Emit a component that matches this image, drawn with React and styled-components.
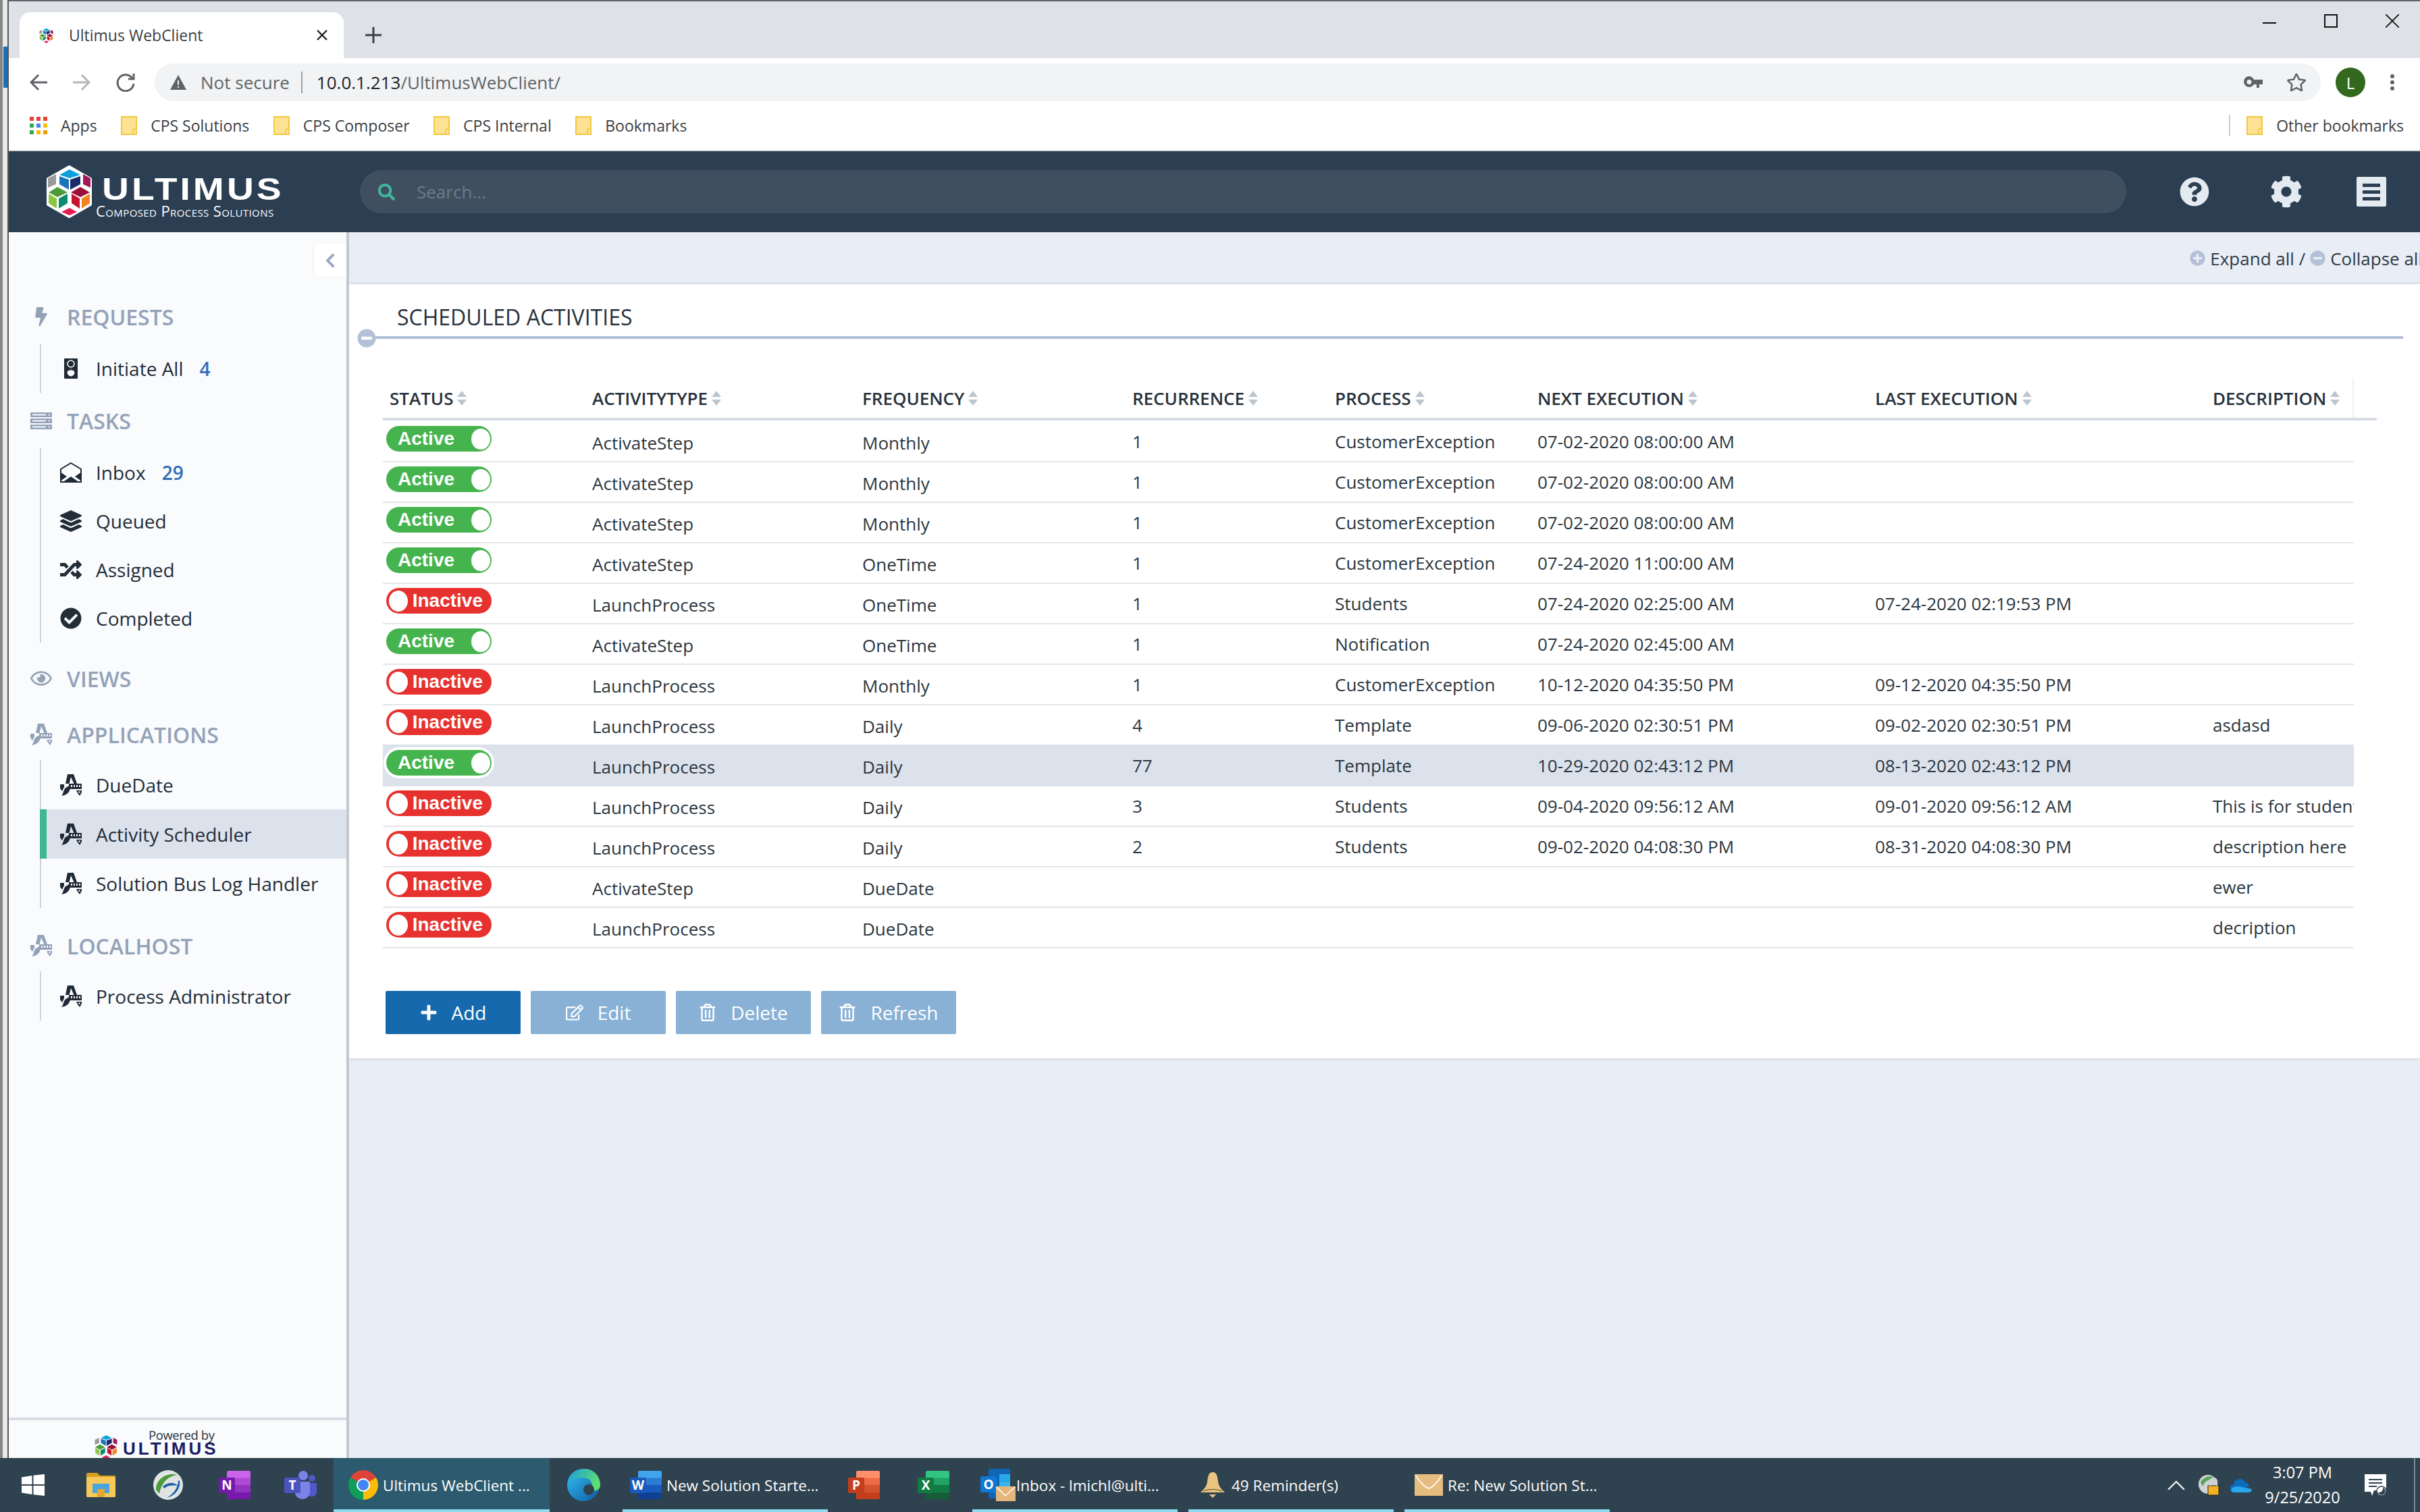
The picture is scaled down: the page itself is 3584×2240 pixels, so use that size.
import React from 'react'
import styled, { createGlobalStyle } from 'styled-components'
import {
  FaBolt, FaLayerGroup, FaRandom, FaCheckCircle, FaRegEye,
  FaQuestionCircle, FaCog, FaSearch, FaChevronLeft, FaPlus, FaRegEdit, FaRegTrashAlt,
  FaRegStar, FaPlusCircle, FaMinusCircle,
} from 'react-icons/fa'

const Global = createGlobalStyle`
  html, body { margin: 0; width: 3584px; height: 2240px; overflow: hidden; background: #e9edf5; }
  * { box-sizing: border-box; }
  body { font-family: "Open Sans", "Liberation Sans", sans-serif; }
`

const Screen = styled.div`
  width: 3584px;
  height: 2240px;
  display: flex;
  flex-direction: column;
  overflow: hidden;
`
const Desktop = styled.div`
  flex: 1;
  min-height: 0;
  display: flex;
`
const DesktopEdge = styled.div`
  width: 13px;
  background:
    linear-gradient(#1a6fb5, #1a6fb5) 5px 69px / 6px 61px no-repeat,
    linear-gradient(to right, #868686 0 4px, #e9e9e9 4px 11px, #555 11px 13px);
`
const Browser = styled.div`
  flex: 1;
  min-width: 0;
  display: flex;
  flex-direction: column;
`

/* chrome */
const TabStrip = styled.div`
  height: 86px;
  background: #dee1e6;
  border-top: 2px solid #5f6368;
  padding: 16px 0 0 16px;
  display: flex;
  align-items: flex-start;
`
const Tab = styled.div`
  width: 480px;
  height: 68px;
  background: #fff;
  border-radius: 16px 16px 0 0;
  display: flex;
  align-items: center;
  padding: 0 24px 0 28px;
  font-size: 23px;
  color: #3c4043;
`
const TabTitle = styled.span`
  margin-left: 22px;
  flex: 1;
`
const NewTab = styled.div`
  margin: 22px 0 0 32px;
  width: 24px;
  height: 24px;
  display: flex;
`
const WinControls = styled.div`
  margin-left: auto;
  display: flex;
  align-items: center;
  gap: 71px;
  padding: 3px 31px 0 0;
`
const Toolbar = styled.div`
  height: 64px;
  background: #fff;
  display: flex;
  align-items: center;
  padding: 8px 38px 0 28px;
`
const NavBtn = styled.div`
  width: 32px;
  height: 32px;
  margin-right: ${p => p.$gap}px;
  display: flex;
  align-items: center;
  justify-content: center;
`
const Omnibox = styled.div`
  flex: 1;
  height: 56px;
  background: #f1f3f4;
  border-radius: 28px;
  display: flex;
  align-items: center;
  padding: 0 21px 0 23px;
  font-size: 26px;
`
const NotSecure = styled.span`
  color: #5f6368;
  margin-left: 21px;
`
const OmniDivider = styled.span`
  width: 2px;
  height: 32px;
  background: #9aa0a6;
  margin: 0 21px 0 17px;
`
const Url = styled.span`
  color: #202124;
`
const UrlRest = styled.span`
  color: #5f6368;
`
const OmniRight = styled.div`
  margin-left: auto;
  display: flex;
  align-items: center;
  gap: 35px;
`
const Avatar = styled.div`
  width: 44px;
  height: 44px;
  border-radius: 50%;
  background: #33691e;
  color: #fff;
  font-size: 24px;
  display: flex;
  align-items: center;
  justify-content: center;
  margin: 0 37px 0 22px;
`
const BookmarkBar = styled.div`
  height: 74px;
  background: #fff;
  border-bottom: 2px solid #dadce0;
  display: flex;
  align-items: center;
  padding: 0 24px 0 31px;
  font-size: 23px;
  color: #3c4043;
`
const Bookmark = styled.div`
  display: flex;
  align-items: center;
  gap: 20px;
  margin-right: 35.5px;
`
const BookmarkEnd = styled.div`
  margin-left: auto;
  display: flex;
  align-items: center;
  gap: 20px;
  border-left: 2px solid #c9cbce;
  padding-left: 24px;
  height: 32px;
`

/* app header */
const AppBar = styled.div`
  height: 120px;
  background: #2b3e52;
  display: flex;
  align-items: center;
  padding-left: 55px;
`
const Brand = styled.div`
  width: 465px;
  display: flex;
  align-items: center;
  gap: 5px;
`
const BrandText = styled.div`
  color: #fff;
  display: flex;
  flex-direction: column;
  padding-top: 14px;
`
const BrandName = styled.div`
  font-family: "Liberation Sans", sans-serif;
  font-weight: 700;
  font-size: 46px;
  line-height: 42px;
  letter-spacing: 3.4px;
  margin-left: 9px;
  transform: scaleX(1.2);
  transform-origin: left center;
  white-space: nowrap;
`
const BrandSub = styled.div`
  font-size: 22px;
  line-height: 22px;
  font-variant: small-caps;
  white-space: nowrap;
  letter-spacing: 0.4px;
`
const SearchBar = styled.div`
  width: 2616px;
  height: 64px;
  background: #3f4f60;
  border-radius: 32px;
  display: flex;
  align-items: center;
  padding-left: 27px;
  gap: 32px;
  color: #6e7a86;
  font-size: 26px;
`
const AppIcons = styled.div`
  display: flex;
  align-items: center;
  margin-left: 79px;
  color: #e3eaf0;
`
const MenuBox = styled.div`
  width: 44px;
  height: 44px;
  background: #e3eaf0;
  border-radius: 2px;
  margin-left: 80px;
  display: flex;
  flex-direction: column;
  justify-content: center;
  gap: 5px;
  padding: 0 9px;
`
const MenuLine = styled.span`
  height: 5px;
  background: #2b3e52;
`

/* app body */
const AppBody = styled.div`
  flex: 1;
  min-height: 0;
  display: flex;
`
const Sidebar = styled.aside`
  position: relative;
  width: 504px;
  background: #f9fbfd;
  border-right: 4px solid #c3c8d0;
  padding-top: 84px;
  display: flex;
  flex-direction: column;
`
const Collapse = styled.div`
  position: absolute;
  top: 17px;
  right: 0;
  width: 48px;
  height: 49px;
  background: #fff;
  border-radius: 6px 0 0 6px;
  color: #9aa5c0;
  display: flex;
  align-items: center;
  justify-content: center;
  font-size: 24px;
  box-shadow: -1px 0 2px rgba(0, 0, 0, 0.08);
`
const GroupHead = styled.div`
  height: ${p => p.$h || 82}px;
  margin-top: ${p => p.$top || 0}px;
  display: flex;
  align-items: center;
  gap: 22px;
  padding-left: 32px;
  font-size: 32px;
  font-weight: 600;
  color: #94a2b8;
`
const IconSlot = styled.span`
  width: 32px;
  height: 32px;
  flex: none;
  display: flex;
  align-items: center;
  justify-content: center;
  font-size: ${p => p.$size || 32}px;
`
const ItemList = styled.div`
  margin-left: 46px;
  border-left: 2px solid #d0d3d8;
`
const Item = styled.div`
  height: ${p => p.$h || 72}px;
  display: flex;
  align-items: center;
  gap: 21px;
  padding-left: ${p => (p.$active ? 20 : 28)}px;
  margin-left: ${p => (p.$active ? -2 : 0)}px;
  font-size: 28px;
  color: #232d38;
  background: ${p => (p.$active ? '#dce2ec' : 'transparent')};
  border-left: ${p => (p.$active ? '10px solid #3fb793' : '0')};
`
const Count = styled.span`
  color: #2f6db8;
  font-weight: 600;
  margin-left: 3px;
`
const SideFooter = styled.div`
  margin-top: auto;
  height: 60px;
  border-top: 4px solid #d8dde6;
  overflow: hidden;
  display: flex;
  padding: 19px 0 0 126px;
`
const FooterText = styled.div`
  margin: -8px 0 0 7px;
  display: flex;
  flex-direction: column;
`
const PoweredBy = styled.div`
  font-size: 18.500px;
  line-height: 21px;
  color: #2c3440;
  letter-spacing: -0.4px;
  align-self: flex-end;
  margin-right: 6px;
`
const FooterName = styled.div`
  font-family: "Liberation Sans", sans-serif;
  font-weight: 700;
  font-size: 26px;
  line-height: 20px;
  color: #1c1c63;
  letter-spacing: 4px;
`

/* main */
const Main = styled.main`
  flex: 1;
  min-width: 0;
  background: #e9edf5;
  overflow: hidden;
`
const ExpandBar = styled.div`
  height: 77px;
  display: flex;
  align-items: center;
  justify-content: flex-end;
  font-size: 26px;
  color: #2f3b47;
  white-space: nowrap;
  margin-right: -4px;
  gap: 7px;
`
const RoundIcon = styled.span`
  color: #b3c0d8;
  display: flex;
  font-size: 23px;
`
const Panel = styled.section`
  background: #fff;
  padding-bottom: 36px;
  box-shadow: 0 -2px 2px rgba(90, 100, 120, 0.12), 0 2px 3px rgba(90, 100, 120, 0.15);
`
const SectionHead = styled.div`
  position: relative;
  height: 81px;
  margin: 0 25px 0 39px;
  padding: 19px 0 0 32px;
  border-bottom: 4px solid #b0bfd5;
  display: flex;
  align-items: center;
  font-size: 32px;
  color: #28323c;
`
const SectionToggle = styled.span`
  position: absolute;
  left: -27px;
  bottom: -17px;
  width: 28px;
  height: 28px;
  color: #b3c0d8;
  font-size: 28px;
  display: flex;
`
const TableHead = styled.div`
  margin: 58px 0 0 50px;
  width: 2953px;
  height: 63px;
  border-bottom: 4px solid #d6dce6;
  display: flex;
`
const HeadCell = styled.div`
  width: ${p => p.$w}px;
  padding-left: 10px;
  display: flex;
  align-items: center;
  gap: 5px;
  font-size: 26px;
  font-weight: 600;
  color: #28323c;
  white-space: nowrap;
  border-right: ${p => (p.$last ? '2px solid #eef0f3' : '0')};
`
const SortArrows = styled.svg`
  width: 16px;
  height: 22px;
  fill: #bcc6cc;
`
const Rows = styled.div`
  margin-left: 50px;
  width: 2919px;
  padding-top: 2px;
`
const Row = styled.div`
  height: 60px;
  display: flex;
  border-bottom: 2px solid ${p => (p.$selected ? '#dbe2ec' : '#e1e6ec')};
  background: ${p => (p.$selected ? '#dbe2ec' : 'transparent')};
  box-shadow: ${p => (p.$selected ? '0 -2px 0 #dbe2ec' : 'none')};
`
const Cell = styled.div`
  width: ${p => p.$w}px;
  padding: ${p => (p.$drop ? '4px' : '0')} 0 0 10px;
  display: flex;
  align-items: center;
  font-size: 26px;
  color: #2b3640;
  white-space: nowrap;
  overflow: hidden;
`
const StatusCell = styled.div`
  width: ${p => p.$w}px;
  padding: 6px 0 0 5px;
`
const Toggle = styled.div`
  width: 156px;
  height: 38px;
  border-radius: 19px;
  background: ${p => (p.$on ? '#45b44e' : '#e6312f')};
  box-shadow: ${p => (p.$focus ? '0 0 0 4px #fff' : 'none')};
  display: flex;
  align-items: center;
  flex-direction: ${p => (p.$on ? 'row' : 'row-reverse')};
  justify-content: space-between;
  padding: ${p => (p.$on ? '0 2px 0 17px' : '0 13px 0 4px')};
  font-family: "Liberation Sans", sans-serif;
  font-weight: 700;
  font-size: 28px;
  color: #fff;
`
const Knob = styled.span`
  width: 28px;
  height: 31px;
  background: #fff;
  border-radius: 50%;
`
const Actions = styled.div`
  margin: 63px 0 0 54px;
  display: flex;
  gap: 15px;
`
const ActionBtn = styled.div`
  width: 200px;
  height: 64px;
  border-radius: 2px;
  background: ${p => (p.$primary ? '#1669ad' : '#88b1d5')};
  color: #fff;
  display: flex;
  align-items: center;
  justify-content: center;
  gap: 21px;
  font-size: 28px;
  & svg { font-size: 26px; }
`

/* taskbar */
const Taskbar = styled.div`
  height: 80px;
  background: #2f424f;
  display: flex;
  color: #fff;
  font-size: 22.5px;
`
const TaskSlot = styled.div`
  width: ${p => p.$w}px;
  margin-right: ${p => p.$gap || 0}px;
  flex: none;
  display: flex;
  align-items: center;
  justify-content: ${p => (p.$label ? 'flex-start' : 'center')};
  gap: ${p => p.$iconGap || 7}px;
  padding-left: ${p => p.$inset || 0}px;
  white-space: nowrap;
  background: ${p => (p.$active ? '#2c5a6e' : 'transparent')};
  border-bottom: ${p => (p.$open ? '4px solid #8fd8f0' : '0')};
  padding-top: ${p => (p.$open ? 4 : 0)}px;
`
const Tray = styled.div`
  margin-left: auto;
  display: flex;
  align-items: center;
`
const TraySlot = styled.span`
  display: flex;
  margin: 0 ${p => p.$right || 0}px 0 ${p => p.$left || 0}px;
`
const Clock = styled.div`
  width: 150px;
  text-align: center;
  font-size: 23.500px;
  line-height: 37px;
`
const ShowDesktop = styled.span`
  width: 2px;
  height: 80px;
  background: #7c8a94;
  margin: 0 7px 0 41px;
`

const ICON = '#1f2a36'

const UltimusLogo = ({ w, h, plain }) => (
  <svg width={w} height={h} viewBox="0 0 69 78" style={{ flex: 'none' }}>
    {!plain && <path d="M34.5 2 L66 20 V58 L34.5 76 L3 58 V20 Z" fill="#fff" stroke="#fff" strokeWidth="4" strokeLinejoin="round" />}
    <path d="M35 6 L51 14 L35 19 L20 14 Z" fill="#0aa0dc" />
    <path d="M20 16 V28 L34 36 V21 Z" fill="#1a74bb" />
    <path d="M51 16 V28 L36 36 V21 Z" fill="#1b2c6b" />
    <path d="M3 19 L15 13 V28 L3 33 Z" fill="#9a9a9a" />
    <path d="M66 19 L55 13 V28 L66 33 Z" fill="#a3185b" />
    <path d="M17 32 L32 40 L17 47 L4 40 Z" fill="#4c9a3a" />
    <path d="M4 42 L16 49 V64 L4 56 Z" fill="#8dc63f" />
    <path d="M19 49 L32 42 V56 L19 64 Z" fill="#0d8b6e" />
    <path d="M51 32 L65 40 L51 47 L37 40 Z" fill="#9c0f3a" />
    <path d="M38 42 L50 49 V64 L38 56 Z" fill="#c41230" />
    <path d="M53 49 L65 42 V56 L53 64 Z" fill="#f58220" />
    <path d="M35 63 L46 69 L35 74 L23 69 Z" fill="#e21f4f" />
  </svg>
)

const AppGlyph = ({ color = ICON }) => (
  <svg width="32" height="32" viewBox="0 0 32 32">
    <path d="M11 0 H20 L25 14 H20.500 L16 4 L13.500 14 H8 Z" fill={color} />
    <rect x="13" y="14" width="19" height="8" fill={color} />
    <path d="M16 16h2v3h-2zM20 16h2v3h-2zM24 16h2v3h-2zM28 16h2v3h-2z" fill="#f9fbfd" />
    <path d="M15 16 C16 24 12 31 2 32 C6 28 4 22 10 19 Z" fill={color} />
    <path d="M0 15 H6 V19 L3 25 L0 21 Z" fill={color} />
    <path d="M24 24 H32 V27 L29 32 L26 28 Z" fill={color} />
    <circle cx="28.500" cy="26.500" r="1.200" fill="#f9fbfd" />
  </svg>
)

const TrafficLight = () => (
  <svg width="20" height="30" viewBox="0 0 20 30">
    <rect width="20" height="30" rx="1" fill={ICON} />
    <circle cx="10" cy="8" r="5" fill="none" stroke="#f9fbfd" strokeWidth="1.600" />
    <path d="M5.500 9 A5 4 0 0 1 14.500 9 Z" fill={ICON} />
    <circle cx="10" cy="21" r="5.400" fill="#f9fbfd" />
    <path d="M5 18 A6 5 0 0 1 15 18 L15 19 A6 4 0 0 0 5 19 Z" fill={ICON} />
  </svg>
)

const TasksIcon = () => (
  <svg width="32" height="25" viewBox="0 0 32 25">
    {[0, 9, 18].map(y => (
      <g key={y}>
        <rect y={y} width="32" height="7" fill="#94a2b8" />
        <rect x="3" y={y + 2.5} width="20" height="2" fill="#f9fbfd" />
        <rect x="27" y={y + 2.5} width="2" height="2" fill="#f9fbfd" />
      </g>
    ))}
  </svg>
)

const OpenEnvelope = () => (
  <svg width="32" height="30" viewBox="0 0 32 30">
    <path d="M16 1 L31 10 V29 H1 V10 Z" fill="#f9fbfd" stroke={ICON} strokeWidth="2" strokeLinejoin="miter" />
    <path d="M0 14 L10 21 L0 28 Z M32 14 L22 21 L32 28 Z M3 30 L16 21 L29 30 Z" fill={ICON} />
  </svg>
)

const FolderIcon = () => (
  <svg width="24" height="28" viewBox="0 0 24 28" style={{ flex: 'none' }}>
    <rect x="1" y="1" width="22" height="26" fill="#fde293" stroke="#f0c93f" strokeWidth="2" />
    <rect x="18" y="19" width="5" height="8" rx="1" fill="#fde293" stroke="#f0c93f" strokeWidth="1.500" />
  </svg>
)

const AppsIcon = () => {
  const colors = ['#ea4335', '#ea4335', '#ea4335', '#34a853', '#4285f4', '#fbbc05', '#34a853', '#fbbc05', '#f29900']
  return (
    <svg width="26" height="26" viewBox="0 0 26 26">
      {colors.map((c, i) => (
        <rect key={i} x={(i % 3) * 10} y={Math.floor(i / 3) * 10} width="6" height="6" fill={c} />
      ))}
    </svg>
  )
}

const SortIcon = () => (
  <SortArrows viewBox="0 0 16 22">
    <path d="M8 0 L15 9 H1 Z" />
    <path d="M8 22 L15 13 H1 Z" />
  </SortArrows>
)

/* taskbar app icons */
const WinLogo = () => (
  <svg width="34" height="32" viewBox="0 0 34 32" fill="#fff">
    <path d="M0 4.500 L15.500 2 V15 H0 Z M17.500 1.700 L34 0 V15 H17.500 Z M0 17 H15.500 V30 L0 27.500 Z M17.500 17 H34 V32 L17.500 30.300 Z" />
  </svg>
)
const Explorer = () => (
  <svg width="43" height="36" viewBox="0 0 43 36">
    <path d="M0 2 a2 2 0 0 1 2-2 H16 L20 4 H43 V34 a2 2 0 0 1-2 2 H2 a2 2 0 0 1-2-2 Z" fill="#d99f21" />
    <rect y="6" width="43" height="30" rx="2" fill="#f6c958" />
    <path d="M9 16 H34 V30 H27 V24 H16 V30 H9 Z" fill="#4aa4e0" />
    <rect x="16" y="24" width="11" height="12" fill="#e3a92d" />
  </svg>
)
const GlobeApp = () => (
  <svg width="44" height="46" viewBox="0 0 44 46">
    <circle cx="22" cy="23" r="22" fill="#dfe3e3" />
    <path d="M4 30 C4 14 20 4 36 8 C24 9 12 18 9 36 Z" fill="#4c9a3a" />
    <path d="M37 16 C37 27 30 36 20 42 C30 40 41 30 39 17 Z" fill="#1a5fa8" />
    <path d="M14 25 C22 18 32 19 36 24 C30 23 22 23 16 28 Z" fill="#1a5fa8" />
  </svg>
)
const Tile = ({ w = 47, h = 42, a, b, c, d, letter, tile }) => (
  <svg width={w} height={h} viewBox="0 0 47 42">
    <rect x="12" width="35" height="42" rx="2" fill={a} />
    <rect x="12" y="10.500" width="35" height="10.500" fill={b} />
    <rect x="12" y="21" width="35" height="10.500" fill={c} />
    <rect x="12" y="31.500" width="35" height="10.500" fill={d} />
    <rect y="10" width="24" height="23" rx="2" fill={tile} />
    <text x="12" y="28" fontSize="19" fontWeight="700" fill="#fff" textAnchor="middle" fontFamily="Open Sans">{letter}</text>
  </svg>
)
const Teams = () => (
  <svg width="48" height="42" viewBox="0 0 48 42">
    <circle cx="28" cy="7" r="7" fill="#7b83eb" />
    <circle cx="41" cy="11" r="5" fill="#5059c9" />
    <path d="M36 18 H48 V32 a7 7 0 0 1-12 4 Z" fill="#5059c9" />
    <path d="M16 16 H38 V32 a11 10 0 0 1-22 0 Z" fill="#7b83eb" />
    <rect y="10" width="24" height="23" rx="2" fill="#4b53bc" />
    <text x="12" y="28" fontSize="19" fontWeight="700" fill="#fff" textAnchor="middle" fontFamily="Open Sans">T</text>
  </svg>
)
const ChromeLogo = () => (
  <svg width="44" height="44" viewBox="0 0 44 44">
    <path d="M22 22 L3 11 A22 22 0 0 1 41 11 Z" fill="#db4437" />
    <path d="M22 22 L3 11 A22 22 0 0 0 22 44 Z" fill="#0f9d58" />
    <path d="M22 22 L41 11 A22 22 0 0 1 22 44 Z" fill="#fbbc05" />
    <circle cx="22" cy="22" r="10" fill="#fff" />
    <circle cx="22" cy="22" r="8" fill="#4285f4" />
  </svg>
)
const EdgeLogo = () => (
  <svg width="49" height="48" viewBox="0 0 49 48">
    <defs>
      <linearGradient id="edgeA" x1="0" y1="0" x2="1" y2="1">
        <stop offset="0" stopColor="#35c1f1" />
        <stop offset="1" stopColor="#0c59a4" />
      </linearGradient>
      <linearGradient id="edgeB" x1="0" y1="0" x2="1" y2="0.500">
        <stop offset="0" stopColor="#1b9de2" />
        <stop offset="1" stopColor="#5fe06c" />
      </linearGradient>
    </defs>
    <circle cx="24" cy="24" r="24" fill="url(#edgeA)" />
    <path d="M2 18 C6 4 18 0 26 0 C40 0 49 12 49 24 C49 32 40 34 34 32 C40 28 38 14 24 13 C12 13 4 16 2 18 Z" fill="url(#edgeB)" />
    <circle cx="32" cy="31" r="8" fill="#2f424f" />
  </svg>
)
const Bell = () => (
  <svg width="36" height="38" viewBox="0 0 36 38" fill="#e8c47f">
    <path d="M18 0 C24 0 25 6 26 14 C27 22 32 26 36 30 H0 C4 26 9 22 10 14 C11 6 12 0 18 0 Z" />
    <path d="M13 33 H23 L18 38 Z" />
    <path d="M4 28 Q18 23 32 28" fill="none" stroke="#4a3f2a" strokeWidth="1" />
  </svg>
)
const Envelope = () => (
  <svg width="42" height="32" viewBox="0 0 42 32">
    <rect width="42" height="32" fill="#e6bd7f" />
    <path d="M2 2 C8 12 14 19 21 21 C28 19 34 12 40 2" fill="none" stroke="#fff" strokeWidth="1.500" />
  </svg>
)
const Outlook = () => (
  <svg width="52" height="48" viewBox="0 0 52 48">
    <rect x="12" width="32" height="44" rx="2" fill="#1066b5" />
    <rect x="28" y="8" width="16" height="12" fill="#28a8ea" />
    <rect x="28" y="20" width="16" height="12" fill="#50d9ff" opacity="0.700" />
    <rect y="11" width="24" height="24" rx="2" fill="#0f78d4" />
    <text x="12" y="30" fontSize="19" fontWeight="700" fill="#fff" textAnchor="middle" fontFamily="Open Sans">O</text>
    <rect x="23" y="26" width="29" height="22" fill="#e6b57a" />
    <path d="M24 27 L37 40 L51 27" fill="none" stroke="#fff" strokeWidth="1.500" />
  </svg>
)
const LockGlobe = () => (
  <svg width="31" height="32" viewBox="0 0 31 32">
    <circle cx="14" cy="15" r="14" fill="#cfd3d3" />
    <path d="M3 12 C8 3 18 1 26 6 C18 6 10 9 6 18 Z" fill="#5aa25a" />
    <rect x="14" y="17" width="16" height="14" fill="#f5b023" stroke="#222" strokeWidth="1" />
    <path d="M17 17 V11 a5 5 0 0 1 10 0 V17" fill="none" stroke="#c9cfd3" strokeWidth="2.500" />
  </svg>
)
const OneDrive = () => (
  <svg width="32" height="21" viewBox="0 0 32 21">
    <path d="M6 21 a6 6 0 0 1-1-12 a9 9 0 0 1 17-3 a7 7 0 0 1 6 6 Z" fill="#0f6cbd" />
    <path d="M6 21 C0 21 0 15 5 13 L12 12 L32 16 C32 19 30 21 27 21 Z" fill="#28a8ea" />
  </svg>
)
const NoticeIcon = () => (
  <svg width="32" height="32" viewBox="0 0 32 32">
    <path d="M0 0 H32 V24 H14 L11 32 L9 26 H0 Z" fill="#fff" />
    <path d="M6 7 H26 V9 H6 Z M6 12 H26 V14 H6 Z M6 17 H18 V19 H6 Z" fill="#2f424f" />
    <circle cx="25" cy="25" r="7" fill="#fff" stroke="#2f424f" strokeWidth="1.500" />
    <path d="M27 20 a5.500 5.500 0 1 1-7 7 a6 6 0 0 0 7-7 Z" fill="#2f424f" />
  </svg>
)

const COLS = [300, 400, 400, 300, 300, 500, 500, 219]
const HEADS = ['STATUS', 'ACTIVITYTYPE', 'FREQUENCY', 'RECURRENCE', 'PROCESS', 'NEXT EXECUTION', 'LAST EXECUTION', 'DESCRIPTION']

const ROWS = [
  [true, 'ActivateStep', 'Monthly', '1', 'CustomerException', '07-02-2020 08:00:00 AM', '', ''],
  [true, 'ActivateStep', 'Monthly', '1', 'CustomerException', '07-02-2020 08:00:00 AM', '', ''],
  [true, 'ActivateStep', 'Monthly', '1', 'CustomerException', '07-02-2020 08:00:00 AM', '', ''],
  [true, 'ActivateStep', 'OneTime', '1', 'CustomerException', '07-24-2020 11:00:00 AM', '', ''],
  [false, 'LaunchProcess', 'OneTime', '1', 'Students', '07-24-2020 02:25:00 AM', '07-24-2020 02:19:53 PM', ''],
  [true, 'ActivateStep', 'OneTime', '1', 'Notification', '07-24-2020 02:45:00 AM', '', ''],
  [false, 'LaunchProcess', 'Monthly', '1', 'CustomerException', '10-12-2020 04:35:50 PM', '09-12-2020 04:35:50 PM', ''],
  [false, 'LaunchProcess', 'Daily', '4', 'Template', '09-06-2020 02:30:51 PM', '09-02-2020 02:30:51 PM', 'asdasd'],
  [true, 'LaunchProcess', 'Daily', '77', 'Template', '10-29-2020 02:43:12 PM', '08-13-2020 02:43:12 PM', ''],
  [false, 'LaunchProcess', 'Daily', '3', 'Students', '09-04-2020 09:56:12 AM', '09-01-2020 09:56:12 AM', 'This is for students'],
  [false, 'LaunchProcess', 'Daily', '2', 'Students', '09-02-2020 04:08:30 PM', '08-31-2020 04:08:30 PM', 'description here'],
  [false, 'ActivateStep', 'DueDate', '', '', '', '', 'ewer'],
  [false, 'LaunchProcess', 'DueDate', '', '', '', '', 'decription'],
]

const BOOKMARKS = ['CPS Solutions', 'CPS Composer', 'CPS Internal', 'Bookmarks']

const App = () => (
  <Screen>
    <Global />
    <Desktop>
      <DesktopEdge />
      <Browser>
        <TabStrip>
          <Tab>
            <UltimusLogo w={23} h={25} plain />
            <TabTitle>Ultimus WebClient</TabTitle>
            <svg width="16" height="16" viewBox="0 0 16 16" stroke="#202124" strokeWidth="2.400"><path d="M1 1 L15 15 M15 1 L1 15" /></svg>
          </Tab>
          <NewTab>
            <svg width="24" height="24" viewBox="0 0 24 24" stroke="#3c4043" strokeWidth="3"><path d="M12 0 V24 M0 12 H24" /></svg>
          </NewTab>
          <WinControls>
            <svg width="20" height="20" viewBox="0 0 20 20" stroke="#111" strokeWidth="2"><path d="M0 13 H20" /></svg>
            <svg width="20" height="20" viewBox="0 0 20 20" stroke="#111" strokeWidth="2" fill="none"><rect x="1" y="1" width="18" height="18" /></svg>
            <svg width="20" height="20" viewBox="0 0 20 20" stroke="#111" strokeWidth="1.800"><path d="M0 0 L20 20 M20 0 L0 20" /></svg>
          </WinControls>
        </TabStrip>
        <Toolbar>
          <NavBtn $gap={32}>
            <svg width="26" height="26" viewBox="0 0 26 26" fill="none" stroke="#5f6368" strokeWidth="3"><path d="M26 13 H3 M13 2 L2 13 L13 24" /></svg>
          </NavBtn>
          <NavBtn $gap={33}>
            <svg width="26" height="26" viewBox="0 0 26 26" fill="none" stroke="#b4b7ba" strokeWidth="3"><path d="M0 13 H23 M13 2 L24 13 L13 24" /></svg>
          </NavBtn>
          <NavBtn $gap={27}>
            <svg width="28" height="28" viewBox="0 0 28 28" fill="none" stroke="#5f6368" strokeWidth="3"><path d="M24 8 A12 12 0 1 0 26 16" /><path d="M26 1 V9 H18" /></svg>
          </NavBtn>
          <Omnibox>
            <svg width="24" height="22" viewBox="0 0 24 22"><path d="M12 0 L24 22 H0 Z" fill="#5f6368" /><path d="M11 8 H13 V15 H11 Z M11 17 H13 V19 H11 Z" fill="#f1f3f4" /></svg>
            <NotSecure>Not secure</NotSecure>
            <OmniDivider />
            <Url>10.0.1.213</Url><UrlRest>/UltimusWebClient/</UrlRest>
            <OmniRight>
              <svg width="28" height="18" viewBox="0 0 28 18" fill="#5f6368"><path d="M8 0 a8 8 0 1 0 7 12 H19 V17 H23 V12 H28 V5 H15 A8 8 0 0 0 8 0 Z M8 5 a3.500 3.500 0 1 1 0 7 a3.500 3.500 0 0 1 0-7 Z" fillRule="evenodd" /></svg>
              <FaRegStar color="#5f6368" size={30} />
            </OmniRight>
          </Omnibox>
          <Avatar>L</Avatar>
          <svg width="6" height="24" viewBox="0 0 6 24" fill="#5f6368"><circle cx="3" cy="3" r="3" /><circle cx="3" cy="12" r="3" /><circle cx="3" cy="21" r="3" /></svg>
        </Toolbar>
        <BookmarkBar>
          <Bookmark>
            <AppsIcon />
            Apps
          </Bookmark>
          {BOOKMARKS.map(name => (
            <Bookmark key={name}>
              <FolderIcon />
              {name}
            </Bookmark>
          ))}
          <BookmarkEnd>
            <FolderIcon />
            Other bookmarks
          </BookmarkEnd>
        </BookmarkBar>
        <AppBar>
          <Brand>
            <UltimusLogo w={69} h={78} />
            <BrandText>
              <BrandName>ULTIMUS</BrandName>
              <BrandSub>Composed Process Solutions</BrandSub>
            </BrandText>
          </Brand>
          <SearchBar>
            <FaSearch color="#3fb79b" size={25} />
            Search...
          </SearchBar>
          <AppIcons>
            <FaQuestionCircle size={44} />
            <FaCog size={48} style={{ marginLeft: 90 }} />
            <MenuBox>
              <MenuLine />
              <MenuLine />
              <MenuLine />
            </MenuBox>
          </AppIcons>
        </AppBar>
        <AppBody>
          <Sidebar>
            <Collapse><FaChevronLeft /></Collapse>
            <GroupHead><IconSlot $size={28}><FaBolt /></IconSlot>REQUESTS</GroupHead>
            <ItemList>
              <Item><IconSlot><TrafficLight /></IconSlot>Initiate All<Count>4</Count></Item>
            </ItemList>
            <GroupHead><IconSlot><TasksIcon /></IconSlot>TASKS</GroupHead>
            <ItemList>
              <Item><IconSlot><OpenEnvelope /></IconSlot>Inbox<Count>29</Count></Item>
              <Item><IconSlot><FaLayerGroup /></IconSlot>Queued</Item>
              <Item><IconSlot><FaRandom /></IconSlot>Assigned</Item>
              <Item><IconSlot><FaCheckCircle /></IconSlot>Completed</Item>
            </ItemList>
            <GroupHead $top={12}><IconSlot><FaRegEye /></IconSlot>VIEWS</GroupHead>
            <GroupHead $h={76} $top={4}><IconSlot><AppGlyph color="#94a2b8" /></IconSlot>APPLICATIONS</GroupHead>
            <ItemList>
              <Item $h={73}><IconSlot><AppGlyph /></IconSlot>DueDate</Item>
              <Item $h={73} $active><IconSlot><AppGlyph /></IconSlot>Activity Scheduler</Item>
              <Item $h={73}><IconSlot><AppGlyph /></IconSlot>Solution Bus Log Handler</Item>
            </ItemList>
            <GroupHead $h={76} $top={18}><IconSlot><AppGlyph color="#94a2b8" /></IconSlot>LOCALHOST</GroupHead>
            <ItemList>
              <Item $h={73}><IconSlot><AppGlyph /></IconSlot>Process Administrator</Item>
            </ItemList>
            <SideFooter>
              <UltimusLogo w={36} h={41} plain />
              <FooterText>
                <PoweredBy>Powered by</PoweredBy>
                <FooterName>ULTIMUS</FooterName>
              </FooterText>
            </SideFooter>
          </Sidebar>
          <Main>
            <ExpandBar>
              <RoundIcon><FaPlusCircle /></RoundIcon>
              Expand all /
              <RoundIcon><FaMinusCircle /></RoundIcon>
              Collapse all
            </ExpandBar>
            <Panel>
              <SectionHead>
                SCHEDULED ACTIVITIES
                <SectionToggle><FaMinusCircle /></SectionToggle>
              </SectionHead>
              <TableHead>
                {HEADS.map((h, i) => (
                  <HeadCell key={h} $w={COLS[i]} $last={i === 7}>{h}<SortIcon /></HeadCell>
                ))}
              </TableHead>
              <Rows>
                {ROWS.map((r, i) => (
                  <Row key={i} $selected={i === 8}>
                    <StatusCell $w={COLS[0]}>
                      <Toggle $on={r[0]} $focus={i === 8}>
                        {r[0] ? 'Active' : 'Inactive'}
                        <Knob />
                      </Toggle>
                    </StatusCell>
                    {r.slice(1).map((v, j) => (
                      <Cell key={j} $w={COLS[j + 1]} $drop={j < 2}>{v}</Cell>
                    ))}
                  </Row>
                ))}
              </Rows>
              <Actions>
                <ActionBtn $primary><FaPlus />Add</ActionBtn>
                <ActionBtn><FaRegEdit />Edit</ActionBtn>
                <ActionBtn><FaRegTrashAlt />Delete</ActionBtn>
                <ActionBtn><FaRegTrashAlt />Refresh</ActionBtn>
              </Actions>
            </Panel>
          </Main>
        </AppBody>
      </Browser>
    </Desktop>
    <Taskbar>
      <TaskSlot $w={98}><WinLogo /></TaskSlot>
      <TaskSlot $w={102}><Explorer /></TaskSlot>
      <TaskSlot $w={98}><GlobeApp /></TaskSlot>
      <TaskSlot $w={98}><Tile a="#ca64ea" b="#ae4bd5" c="#9332bf" d="#7719aa" tile="#7719aa" letter="N" /></TaskSlot>
      <TaskSlot $w={98}><Teams /></TaskSlot>
      <TaskSlot $w={320} $label $active $open $inset={22}><ChromeLogo />Ultimus WebClient ...</TaskSlot>
      <TaskSlot $w={100} $gap={8}><EdgeLogo /></TaskSlot>
      <TaskSlot $w={304} $label $open $inset={11}><Tile a="#41a5ee" b="#2b7cd3" c="#185abd" d="#103f91" tile="#185abd" letter="W" />New Solution Starte...</TaskSlot>
      <TaskSlot $w={106}><Tile a="#ff8f6b" b="#ed6c47" c="#d35230" d="#c43e1c" tile="#c43e1c" letter="P" /></TaskSlot>
      <TaskSlot $w={100} $gap={8}><Tile a="#33c481" b="#21a366" c="#107c41" d="#185c37" tile="#107c41" letter="X" /></TaskSlot>
      <TaskSlot $w={304} $label $open $gap={16} $inset={12} $iconGap={1}><Outlook />Inbox - lmichl@ulti...</TaskSlot>
      <TaskSlot $w={304} $label $open $gap={16} $inset={18} $iconGap={10}><Bell />49 Reminder(s)</TaskSlot>
      <TaskSlot $w={304} $label $open $inset={15}><Envelope />Re: New Solution St...</TaskSlot>
      <Tray>
        <TraySlot $right={20}>
          <svg width="26" height="14" viewBox="0 0 26 14" fill="none" stroke="#fff" strokeWidth="2"><path d="M1 14 L13 2 L25 14" /></svg>
        </TraySlot>
        <TraySlot $right={16}><LockGlobe /></TraySlot>
        <TraySlot><OneDrive /></TraySlot>
        <Clock>3:07 PM<br />9/25/2020</Clock>
        <TraySlot $left={17}><NoticeIcon /></TraySlot>
        <ShowDesktop />
      </Tray>
    </Taskbar>
  </Screen>
)

export default App
